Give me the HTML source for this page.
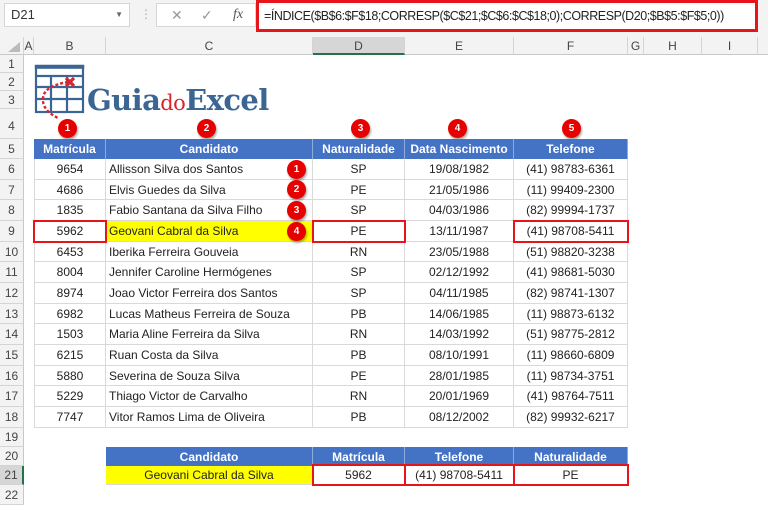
<!DOCTYPE html>
<html><head><meta charset="utf-8"><style>
*{box-sizing:border-box;margin:0;padding:0}
body{width:768px;height:505px;overflow:hidden;background:#fff;font-family:"Liberation Sans",sans-serif;position:relative}
.a{position:absolute}
.ch{position:absolute;top:37px;height:18px;background:#f3f3f3;border-right:1px solid #d4d4d4;border-bottom:1px solid #c8c8c8;font-size:12px;color:#444;text-align:center;line-height:18px}
.rh{position:absolute;left:0;width:24px;background:#f3f3f3;border-bottom:1px solid #d4d4d4;border-right:1px solid #c8c8c8;font-size:12px;color:#444;text-align:center}
.c{position:absolute;font-size:12px;color:#222;border-right:1px solid #d9d9d9;border-bottom:1px solid #d9d9d9;white-space:nowrap;overflow:visible;display:flex;align-items:center;justify-content:center}
.l{justify-content:flex-start;padding-left:3px}
.h{background:#4472c4;color:#fff;font-weight:bold;border-right:1px solid #8eaadb;border-bottom:none}
.y{background:#ffff00}
.rb{position:absolute;border:2.5px solid #e8141c}
.dot{position:absolute;width:19px;height:19px;border-radius:50%;background:#e60000;color:#fff;font-size:10px;font-weight:bold;text-align:center;line-height:19px;box-shadow:1px 2px 2px rgba(0,0,0,.35)}
</style></head><body>
<div class="a" style="left:0;top:0;width:768px;height:37px;background:#f3f3f3"></div>
<div class="a" style="left:4px;top:3px;width:126px;height:24px;background:#fff;border:1px solid #d6d6d6;font-size:13px;color:#333;line-height:22px;padding-left:6px">D21<span style="position:absolute;right:6px;top:0;font-size:8px;color:#666">▼</span></div>
<div class="a" style="left:140px;top:7px;font-size:12px;color:#aaa">⋮</div>
<div class="a" style="left:156px;top:3px;width:100px;height:24px;background:#fff;border:1px solid #d6d6d6;color:#999;font-size:14px;line-height:22px"><span style="position:absolute;left:14px">✕</span><span style="position:absolute;left:44px">✓</span><span style="position:absolute;left:76px;font-style:italic;font-family:'Liberation Serif',serif;color:#555">fx</span></div>
<div class="a" style="left:256px;top:0;width:502px;height:32px;border:3px solid #e8141c;background:#fff;font-size:12.5px;color:#222;line-height:26px;padding-left:5px;white-space:nowrap;letter-spacing:-0.45px;overflow:hidden">=ÍNDICE($B$6:$F$18;CORRESP($C$21;$C$6:$C$18;0);CORRESP(D20;$B$5:$F$5;0))</div>
<div class="ch" style="left:0;width:24px"></div>
<div class="a" style="left:8px;top:42px;width:0;height:0;border-left:12px solid transparent;border-bottom:10px solid #bbb"></div>
<div class="ch" style="left:24px;width:10px">A</div>
<div class="ch" style="left:34px;width:72px">B</div>
<div class="ch" style="left:106px;width:207px">C</div>
<div class="ch" style="left:313px;width:92px;background:#d6d6d6;border-bottom:2px solid #217346">D</div>
<div class="ch" style="left:405px;width:109px">E</div>
<div class="ch" style="left:514px;width:114px">F</div>
<div class="ch" style="left:628px;width:16px">G</div>
<div class="ch" style="left:644px;width:58px">H</div>
<div class="ch" style="left:702px;width:56px">I</div>
<div class="ch" style="left:758px;width:10px;border-right:none"></div>
<div class="rh" style="top:55px;height:18px;line-height:18px">1</div>
<div class="rh" style="top:73px;height:18px;line-height:18px">2</div>
<div class="rh" style="top:91px;height:18px;line-height:18px">3</div>
<div class="rh" style="top:109px;height:30px;line-height:34px">4</div>
<div class="rh" style="top:139px;height:20px;line-height:20px">5</div>
<div class="rh" style="top:159px;height:21px;line-height:21px">6</div>
<div class="rh" style="top:180px;height:20px;line-height:20px">7</div>
<div class="rh" style="top:200px;height:21px;line-height:21px">8</div>
<div class="rh" style="top:221px;height:21px;line-height:21px">9</div>
<div class="rh" style="top:242px;height:20px;line-height:20px">10</div>
<div class="rh" style="top:262px;height:21px;line-height:21px">11</div>
<div class="rh" style="top:283px;height:21px;line-height:21px">12</div>
<div class="rh" style="top:304px;height:20px;line-height:20px">13</div>
<div class="rh" style="top:324px;height:21px;line-height:21px">14</div>
<div class="rh" style="top:345px;height:21px;line-height:21px">15</div>
<div class="rh" style="top:366px;height:20px;line-height:20px">16</div>
<div class="rh" style="top:386px;height:21px;line-height:21px">17</div>
<div class="rh" style="top:407px;height:21px;line-height:21px">18</div>
<div class="rh" style="top:428px;height:19px;line-height:19px">19</div>
<div class="rh" style="top:447px;height:19px;line-height:19px">20</div>
<div class="rh" style="top:466px;height:19px;line-height:19px;background:#d6d6d6;border-right:2px solid #217346">21</div>
<div class="rh" style="top:485px;height:20px;line-height:20px">22</div>
<svg class="a" style="left:34px;top:64px" width="52" height="56" viewBox="0 0 52 56">
<g fill="none" stroke="#3b6694" stroke-width="2.2">
<rect x="2" y="2" width="47" height="46"/>
<line x1="2" y1="12" x2="49" y2="12"/><line x1="2" y1="23" x2="49" y2="23"/><line x1="2" y1="35" x2="49" y2="35"/>
<line x1="17" y1="12" x2="17" y2="48"/><line x1="33" y1="12" x2="33" y2="48"/>
</g>
<rect x="0.8" y="0.8" width="49.4" height="4" fill="#3b6694"/>
<path d="M34 18 C22 20 10 24 9 34 C8 44 16 50 24 54" fill="none" stroke="#d7262e" stroke-width="2.4" stroke-dasharray="3 2"/>
<path d="M32 14 l8 8 M40 14 l-8 8" stroke="#d7262e" stroke-width="3.2"/>
</svg>
<div class="a" style="left:87px;top:80px;font-family:'DejaVu Serif','Liberation Serif',serif;font-weight:bold;font-size:29px;color:#3b6694;letter-spacing:-0.6px;white-space:nowrap;line-height:40px">Guia<span style="color:#d7262e;font-weight:normal;font-size:21px">do</span>Excel</div>
<div class="dot" style="left:58px;top:119px">1</div>
<div class="dot" style="left:197px;top:119px">2</div>
<div class="dot" style="left:351px;top:119px">3</div>
<div class="dot" style="left:448px;top:119px">4</div>
<div class="dot" style="left:562px;top:119px">5</div>
<div class="c h" style="left:34px;top:139px;width:72px;height:20px">Matrícula</div>
<div class="c h" style="left:106px;top:139px;width:207px;height:20px">Candidato</div>
<div class="c h" style="left:313px;top:139px;width:92px;height:20px">Naturalidade</div>
<div class="c h" style="left:405px;top:139px;width:109px;height:20px">Data Nascimento</div>
<div class="c h" style="left:514px;top:139px;width:114px;height:20px">Telefone</div>
<div class="c" style="left:34px;top:159px;width:72px;height:21px;border-left:1px solid #d9d9d9">9654</div><div class="c l" style="left:106px;top:159px;width:207px;height:21px">Allisson Silva dos Santos</div><div class="c" style="left:313px;top:159px;width:92px;height:21px">SP</div><div class="c" style="left:405px;top:159px;width:109px;height:21px">19/08/1982</div><div class="c" style="left:514px;top:159px;width:114px;height:21px">(41) 98783-6361</div>
<div class="c" style="left:34px;top:180px;width:72px;height:20px;border-left:1px solid #d9d9d9">4686</div><div class="c l" style="left:106px;top:180px;width:207px;height:20px">Elvis Guedes da Silva</div><div class="c" style="left:313px;top:180px;width:92px;height:20px">PE</div><div class="c" style="left:405px;top:180px;width:109px;height:20px">21/05/1986</div><div class="c" style="left:514px;top:180px;width:114px;height:20px">(11) 99409-2300</div>
<div class="c" style="left:34px;top:200px;width:72px;height:21px;border-left:1px solid #d9d9d9">1835</div><div class="c l" style="left:106px;top:200px;width:207px;height:21px">Fabio Santana da Silva Filho</div><div class="c" style="left:313px;top:200px;width:92px;height:21px">SP</div><div class="c" style="left:405px;top:200px;width:109px;height:21px">04/03/1986</div><div class="c" style="left:514px;top:200px;width:114px;height:21px">(82) 99994-1737</div>
<div class="c" style="left:34px;top:221px;width:72px;height:21px;border-left:1px solid #d9d9d9">5962</div><div class="c l y" style="left:106px;top:221px;width:207px;height:21px">Geovani Cabral da Silva</div><div class="c" style="left:313px;top:221px;width:92px;height:21px">PE</div><div class="c" style="left:405px;top:221px;width:109px;height:21px">13/11/1987</div><div class="c" style="left:514px;top:221px;width:114px;height:21px">(41) 98708-5411</div>
<div class="c" style="left:34px;top:242px;width:72px;height:20px;border-left:1px solid #d9d9d9">6453</div><div class="c l" style="left:106px;top:242px;width:207px;height:20px">Iberika Ferreira Gouveia</div><div class="c" style="left:313px;top:242px;width:92px;height:20px">RN</div><div class="c" style="left:405px;top:242px;width:109px;height:20px">23/05/1988</div><div class="c" style="left:514px;top:242px;width:114px;height:20px">(51) 98820-3238</div>
<div class="c" style="left:34px;top:262px;width:72px;height:21px;border-left:1px solid #d9d9d9">8004</div><div class="c l" style="left:106px;top:262px;width:207px;height:21px">Jennifer Caroline Hermógenes</div><div class="c" style="left:313px;top:262px;width:92px;height:21px">SP</div><div class="c" style="left:405px;top:262px;width:109px;height:21px">02/12/1992</div><div class="c" style="left:514px;top:262px;width:114px;height:21px">(41) 98681-5030</div>
<div class="c" style="left:34px;top:283px;width:72px;height:21px;border-left:1px solid #d9d9d9">8974</div><div class="c l" style="left:106px;top:283px;width:207px;height:21px">Joao Victor Ferreira dos Santos</div><div class="c" style="left:313px;top:283px;width:92px;height:21px">SP</div><div class="c" style="left:405px;top:283px;width:109px;height:21px">04/11/1985</div><div class="c" style="left:514px;top:283px;width:114px;height:21px">(82) 98741-1307</div>
<div class="c" style="left:34px;top:304px;width:72px;height:20px;border-left:1px solid #d9d9d9">6982</div><div class="c l" style="left:106px;top:304px;width:207px;height:20px">Lucas Matheus Ferreira de Souza</div><div class="c" style="left:313px;top:304px;width:92px;height:20px">PB</div><div class="c" style="left:405px;top:304px;width:109px;height:20px">14/06/1985</div><div class="c" style="left:514px;top:304px;width:114px;height:20px">(11) 98873-6132</div>
<div class="c" style="left:34px;top:324px;width:72px;height:21px;border-left:1px solid #d9d9d9">1503</div><div class="c l" style="left:106px;top:324px;width:207px;height:21px">Maria Aline Ferreira da Silva</div><div class="c" style="left:313px;top:324px;width:92px;height:21px">RN</div><div class="c" style="left:405px;top:324px;width:109px;height:21px">14/03/1992</div><div class="c" style="left:514px;top:324px;width:114px;height:21px">(51) 98775-2812</div>
<div class="c" style="left:34px;top:345px;width:72px;height:21px;border-left:1px solid #d9d9d9">6215</div><div class="c l" style="left:106px;top:345px;width:207px;height:21px">Ruan Costa da Silva</div><div class="c" style="left:313px;top:345px;width:92px;height:21px">PB</div><div class="c" style="left:405px;top:345px;width:109px;height:21px">08/10/1991</div><div class="c" style="left:514px;top:345px;width:114px;height:21px">(11) 98660-6809</div>
<div class="c" style="left:34px;top:366px;width:72px;height:20px;border-left:1px solid #d9d9d9">5880</div><div class="c l" style="left:106px;top:366px;width:207px;height:20px">Severina de Souza Silva</div><div class="c" style="left:313px;top:366px;width:92px;height:20px">PE</div><div class="c" style="left:405px;top:366px;width:109px;height:20px">28/01/1985</div><div class="c" style="left:514px;top:366px;width:114px;height:20px">(11) 98734-3751</div>
<div class="c" style="left:34px;top:386px;width:72px;height:21px;border-left:1px solid #d9d9d9">5229</div><div class="c l" style="left:106px;top:386px;width:207px;height:21px">Thiago Victor de Carvalho</div><div class="c" style="left:313px;top:386px;width:92px;height:21px">RN</div><div class="c" style="left:405px;top:386px;width:109px;height:21px">20/01/1969</div><div class="c" style="left:514px;top:386px;width:114px;height:21px">(41) 98764-7511</div>
<div class="c" style="left:34px;top:407px;width:72px;height:21px;border-left:1px solid #d9d9d9">7747</div><div class="c l" style="left:106px;top:407px;width:207px;height:21px">Vitor Ramos Lima de Oliveira</div><div class="c" style="left:313px;top:407px;width:92px;height:21px">PB</div><div class="c" style="left:405px;top:407px;width:109px;height:21px">08/12/2002</div><div class="c" style="left:514px;top:407px;width:114px;height:21px">(82) 99932-6217</div>
<div class="dot" style="left:287px;top:160px">1</div>
<div class="dot" style="left:287px;top:180px">2</div>
<div class="dot" style="left:287px;top:201px">3</div>
<div class="dot" style="left:287px;top:222px">4</div>
<div class="rb" style="left:33px;top:220px;width:74px;height:23px"></div>
<div class="rb" style="left:312px;top:220px;width:94px;height:23px"></div>
<div class="rb" style="left:513px;top:220px;width:116px;height:23px"></div>
<div class="c h" style="left:106px;top:447px;width:207px;height:19px">Candidato</div>
<div class="c h" style="left:313px;top:447px;width:92px;height:19px">Matrícula</div>
<div class="c h" style="left:405px;top:447px;width:109px;height:19px">Telefone</div>
<div class="c h" style="left:514px;top:447px;width:114px;height:19px">Naturalidade</div>
<div class="c y" style="left:106px;top:466px;width:207px;height:19px">Geovani Cabral da Silva</div>
<div class="c" style="left:313px;top:466px;width:92px;height:19px">5962</div>
<div class="c" style="left:405px;top:466px;width:109px;height:19px">(41) 98708-5411</div>
<div class="c" style="left:514px;top:466px;width:114px;height:19px">PE</div>
<div class="rb" style="left:312px;top:464px;width:94px;height:22px"></div>
<div class="rb" style="left:404px;top:464px;width:111px;height:22px"></div>
<div class="rb" style="left:513px;top:464px;width:116px;height:22px"></div>
</body></html>
